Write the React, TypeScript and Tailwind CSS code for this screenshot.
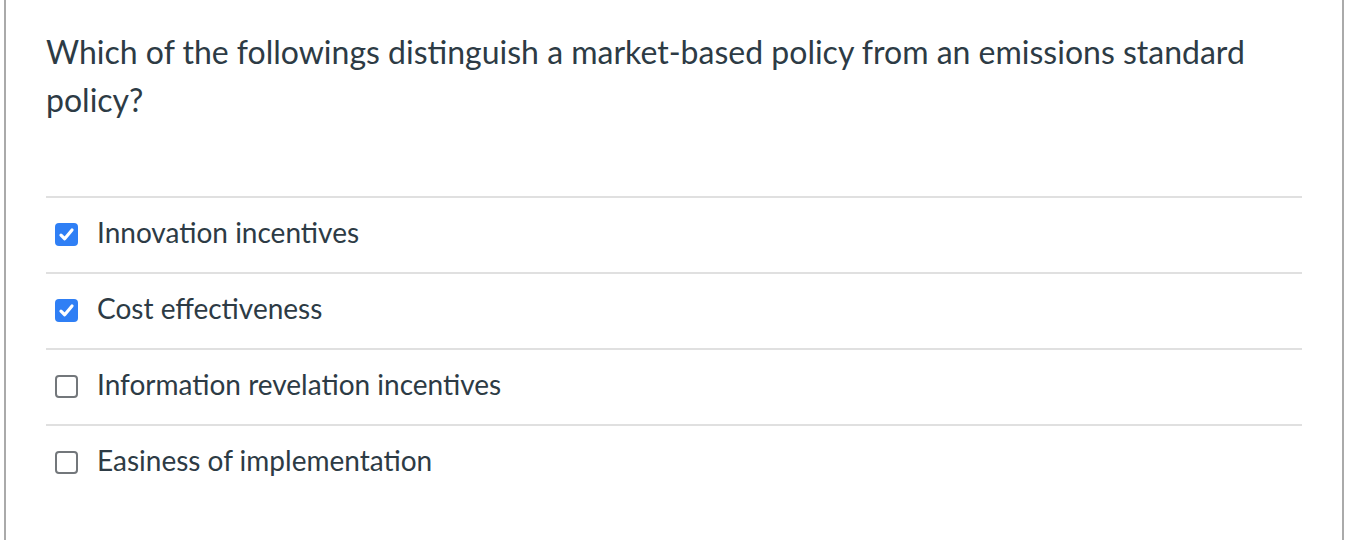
const options = [
  { label: "Innovation incentives", checked: true },
  { label: "Cost effectiveness", checked: true },
  { label: "Information revelation incentives", checked: false },
  { label: "Easiness of implementation", checked: false },
];

function Box({ checked }: { checked: boolean }) {
  if (checked) {
    return (
      <span className="w-[23px] h-[23px] rounded-[4px] bg-[#2f7ff5] flex items-center justify-center shrink-0">
        <svg viewBox="0 0 16 16" className="w-[17px] h-[17px]">
          <path d="M2.8 8.6 L6.3 12 L13.2 3.8" fill="none" stroke="white" strokeWidth="3" strokeLinecap="round" strokeLinejoin="round" />
        </svg>
      </span>
    );
  }
  return <span className="w-[23px] h-[23px] rounded-[4px] border-2 border-[#73777b] bg-white shrink-0" />;
}

export default function App() {
  return (
    <div className="h-[540px] bg-white pl-1 pr-[6px]" style={{ fontFamily: "Lato, 'Open Sans', sans-serif" }}>
      <div className="h-full border-x-2 border-[#aaaaaa] px-[40px] pt-[28px] text-[#2d3b45]">
        <p className="text-[32px] leading-[48px]">
          Which of the followings distinguish a market-based policy from an emissions standard policy?
        </p>
        <div className="mt-[72px]">
          {options.map((o) => (
            <div key={o.label} className="border-t-2 border-[#e0e0e0] h-[76px] flex items-center gap-[19px] pl-[9px] pb-[2px]">
              <Box checked={o.checked} />
              <span className="text-[28px] -mt-[4px]">{o.label}</span>
            </div>
          ))}
        </div>
      </div>
    </div>
  );
}
